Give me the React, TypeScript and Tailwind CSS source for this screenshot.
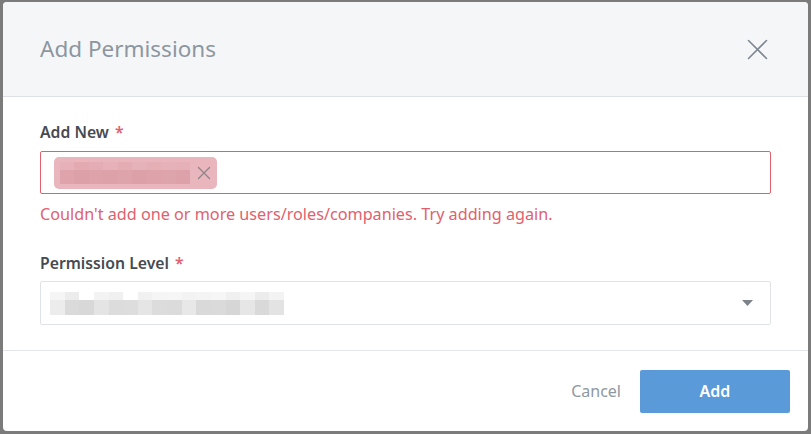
import React from "react";

const pinkCells = [
  ["#e6b1b8", "#e3aab2", "#e4adb5", "#e6b1b8", "#e4adb4", "#e6b2b9", "#e5afb6", "#e6b1b8", "#e5b0b7"],
  ["#dea3ab", "#dca0a8", "#dda2aa", "#dca1a9", "#dea4ac", "#dca0a8", "#dda2aa", "#dea4ac", "#dca1a9"],
];

const grayTop = ["#f5f5f5", "#ececec", "#ffffff", "#f3f3f3", "#f0f0f0", "#ffffff", "#f1f1f1", "#f5f5f5", "#f6f6f6", "#f3f3f3", "#f4f4f4", "#f6f6f6", "#f0f0f0", "#f5f5f5", "#ececec", "#f3f3f3"];
const grayBot = ["#ececec", "#dadada", "#d8d8d8", "#e4e4e4", "#dcdcdc", "#dddddd", "#e5e5e5", "#dcdcdc", "#dbdbdb", "#e8e8e8", "#d9d9d9", "#dadada", "#d6d6d6", "#e6e6e6", "#d9d9d9", "#e3e3e3"];

export default function App() {
  return (
    <div
      className="w-[811px] h-[434px] bg-[#7b7b7b] pt-[2px] pl-[3px] pr-[3px] pb-[3px]"
      style={{ fontFamily: '"Noto Sans", "Open Sans", sans-serif' }}
    >
      <div className="w-full h-full bg-white rounded-[4px] overflow-hidden flex flex-col">
        {/* Header */}
        <div className="h-[95px] bg-[#f5f6f8] border-b border-[#dde0e4] flex items-center justify-between pl-[37px] pr-[40px] shrink-0">
          <h1 className="text-[22.5px] leading-[30px] text-[#8d96a0]">Add Permissions</h1>
          <svg width="21" height="21" viewBox="0 0 21 21" className="mt-[1px]">
            <path d="M1.5 1.5 L19.5 19.5 M19.5 1.5 L1.5 19.5" stroke="#7f8892" strokeWidth="1.6" strokeLinecap="round" />
          </svg>
        </div>

        {/* Body */}
        <div className="pl-[37px] pr-[37px] pt-[25px] pb-[25px] border-b border-[#e3e6ea] shrink-0">
          <div className="text-[15.75px] leading-[20px] font-semibold text-[#464b51]">
            Add New <span className="text-[#e0616e] ml-[2px]">*</span>
          </div>
          <div className="mt-[9px] h-[43px] border border-[#e0616e] rounded-[2px] flex items-center pl-[13px]">
            <div className="h-[32px] w-[163px] bg-[#e8b6bc] rounded-[5px] flex items-center pl-[6px]">
              <div className="flex flex-col w-[130px]">
                {pinkCells.map((row, i) => (
                  <div key={i} className={i === 0 ? "flex h-[8px]" : "flex h-[14px]"}>
                    {row.map((c, j) => (
                      <div key={j} className="flex-1" style={{ background: c }} />
                    ))}
                  </div>
                ))}
              </div>
              <svg width="14" height="14" viewBox="0 0 14 14" className="ml-[7px]">
                <path d="M1.5 1.5 L12.5 12.5 M12.5 1.5 L1.5 12.5" stroke="#8f8589" strokeWidth="1.3" strokeLinecap="round" />
              </svg>
            </div>
          </div>
          <div className="mt-[10px] text-[16.2px] leading-[20px] text-[#e0616e]">
            Couldn't add one or more users/roles/companies. Try adding again.
          </div>

          <div className="mt-[29px] text-[15.75px] leading-[20px] font-semibold text-[#464b51]">
            Permission Level <span className="text-[#e0616e] ml-[2px]">*</span>
          </div>
          <div className="mt-[8px] h-[44px] border border-[#dfe3e8] rounded-[2px] flex items-center pl-[9px] pr-[17px]">
            <div className="flex flex-col w-[234px]">
              <div className="flex h-[8px]">
                {grayTop.map((c, j) => (
                  <div key={j} className="flex-1" style={{ background: c }} />
                ))}
              </div>
              <div className="flex h-[15px]">
                {grayBot.map((c, j) => (
                  <div key={j} className="flex-1" style={{ background: c }} />
                ))}
              </div>
            </div>
            <div className="flex-1" />
            <svg width="11" height="6" viewBox="0 0 11 6">
              <path d="M0 0 L11 0 L5.5 6 Z" fill="#7c838b" />
            </svg>
          </div>
        </div>

        {/* Footer */}
        <div className="flex-1 flex items-center justify-end pr-[18px] gap-[19px]">
          <span className="text-[16px] text-[#8e98a2]">Cancel</span>
          <button className="w-[150px] h-[43px] bg-[#5b9ad8] rounded-[2px] text-white text-[16px] font-semibold">
            Add
          </button>
        </div>
      </div>
    </div>
  );
}
